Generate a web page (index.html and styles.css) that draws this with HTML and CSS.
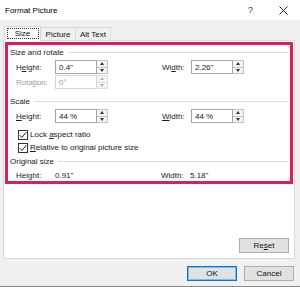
FILE: index.html
```html
<!DOCTYPE html>
<html>
<head>
<meta charset="utf-8">
<link rel="stylesheet" href="styles.css">
</head>
<body>
<div class="dialog">
  <div class="titlebar">
    <span class="title">Format Picture</span>
    <span class="help">?</span>
    <svg class="close" width="9" height="9" viewBox="0 0 9 9"><path d="M0.5 0.5L8.5 8.5M8.5 0.5L0.5 8.5" stroke="#222" stroke-width="1"/></svg>
  </div>
  <div class="tabs">
    <div class="tab active"><span class="focus">Size</span></div>
    <div class="tab">Picture</div>
    <div class="tab tab-alt">Alt Text</div>
  </div>
  <div class="panel">
    <div class="highlight">
      <div class="head"><span>Size and rotate</span><i></i></div>
      <div class="row">
        <div class="field"><label class="lbl">H<u>e</u>ight:</label><div class="input">0.4"</div><div class="spin"><b class="up"></b><b class="down"></b></div></div>
        <div class="field f2"><label class="lbl lbl2">Wi<u>d</u>th:</label><div class="input">2.26"</div><div class="spin"><b class="up"></b><b class="down"></b></div></div>
      </div>
      <div class="row">
        <div class="field disabled"><label class="lbl">Rota<u>t</u>ion:</label><div class="input">0°</div><div class="spin"><b class="up"></b><b class="down"></b></div></div>
      </div>
      <div class="head scale"><span>Scale</span><i></i></div>
      <div class="row">
        <div class="field"><label class="lbl"><u>H</u>eight:</label><div class="input">44 %</div><div class="spin"><b class="up"></b><b class="down"></b></div></div>
        <div class="field f2"><label class="lbl lbl2"><u>W</u>idth:</label><div class="input">44 %</div><div class="spin"><b class="up"></b><b class="down"></b></div></div>
      </div>
      <div class="check first"><span class="box"><svg width="8" height="8" viewBox="0 0 8 8"><path d="M0.8 4.2L3 6.4L7.3 1.2" fill="none" stroke="#222" stroke-width="1"/></svg></span><span>Lock <u>a</u>spect ratio</span></div>
      <div class="check"><span class="box"><svg width="8" height="8" viewBox="0 0 8 8"><path d="M0.8 4.2L3 6.4L7.3 1.2" fill="none" stroke="#222" stroke-width="1"/></svg></span><span><u>R</u>elative to original picture size</span></div>
      <div class="head orig"><span>Original size</span><i></i></div>
      <div class="row info">
        <div class="field"><span class="lbl">Height:</span><span class="val">0.91"</span></div>
        <div class="field f2i"><span class="lbl lbl2">Width:</span><span class="val">5.18"</span></div>
      </div>
    </div>
    <div class="panel-foot"><button class="btn">Re<u>s</u>et</button></div>
  </div>
  <div class="footer">
    <button class="btn default">OK</button>
    <button class="btn">Cancel</button>
  </div>
</div>
</body>
</html>
```
FILE: styles.css
```css
* { box-sizing: border-box; }
html, body { margin: 0; padding: 0; }
body {
  width: 300px;
  height: 287px;
  background: #f0f0f0;
  font-family: "Liberation Sans", Arial, sans-serif;
  font-size: 8px;
  color: #1a1a1a;
  overflow: hidden;
}
u { text-decoration: underline; text-underline-offset: 1px; }
.dialog {
  width: 300px;
  height: 287px;
  display: flex;
  flex-direction: column;
  border-bottom: 1px solid #8a8a8a;
}
.titlebar {
  height: 20px;
  background: #fff;
  display: flex;
  align-items: center;
  padding-left: 5px;
}
.title { font-size: 8px; color: #000; flex: 1; }
.help { font-size: 9px; color: #333; margin-right: 26px; }
.close { margin-right: 12px; }
.tabs {
  height: 20px;
  display: flex;
  align-items: flex-end;
  padding-left: 4px;
}
.tab {
  height: 13px;
  width: 36px;
  border: 1px solid #d9d9d9;
  border-bottom: none;
  background: #f0f0f0;
  display: flex;
  align-items: center;
  justify-content: center;
  margin-left: -1px;
  color: #111;
}
.tab-alt { width: 36px; }
.tab.active {
  height: 15px;
  width: 37px;
  background: #fff;
  margin-left: 0;
  margin-bottom: -1px;
  position: relative;
  z-index: 1;
  align-items: flex-start;
  padding-top: 1px;
}
.focus {
  border: 1px dotted #333;
  width: 32px;
  height: 11px;
  display: flex;
  align-items: center;
  justify-content: center;
}
.panel {
  margin-left: 3px;
  width: 292px;
  height: 219px;
  background: #fff;
  border: 1px solid #d9d9d9;
  padding: 1px;
  display: flex;
  flex-direction: column;
}
.highlight {
  border: 3px solid #d81f64;
  height: 142px;
  padding: 1px 1px 0 2px;
}
.head {
  height: 12px;
  display: flex;
  align-items: center;
  color: #1a1a1a;
}
.head i {
  flex: 1;
  height: 1px;
  background: #dcdcdc;
  margin-left: 4px;
  margin-right: 1px;
}
.row {
  display: flex;
  height: 14px;
  margin-top: 2px;
  padding-left: 6px;
}
.row + .row { margin-top: 1px; }
.field { display: flex; align-items: center; height: 14px; }
.lbl { width: 39px; }
.lbl2 { width: 29px; }
.f2 { margin-left: 54px; }
.input {
  width: 42px;
  height: 14px;
  border: 1px solid #a6a6a6;
  padding-left: 3px;
  display: flex;
  align-items: center;
}
.spin {
  width: 11px;
  height: 14px;
  border: 1px solid #c4c4c4;
  border-left: none;
  background: #f4f4f4;
  display: flex;
  flex-direction: column;
}
.spin b {
  flex: 1;
  display: flex;
  align-items: center;
  justify-content: center;
}
.spin b.up { border-bottom: 1px solid #c4c4c4; }
.spin b::before {
  content: "";
  width: 0; height: 0;
  border-left: 2.5px solid transparent;
  border-right: 2.5px solid transparent;
}
.spin b.up::before { border-bottom: 3px solid #333; }
.spin b.down::before { border-top: 3px solid #333; }
.disabled { color: #9a9a9a; }
.disabled .input { border-color: #d4d4d4; background: #fff; }
.disabled .spin { border-color: #e0e0e0; }
.disabled .spin b.up { border-bottom-color: #e0e0e0; }
.disabled .spin b.up::before { border-bottom-color: #b0b0b0; }
.disabled .spin b.down::before { border-top-color: #b0b0b0; }
.head.scale { margin-top: 6px; }
.check {
  display: flex;
  align-items: center;
  height: 13px;
  padding-left: 8px;
}
.check.first { margin-top: 5px; }
.box {
  width: 10px;
  height: 10px;
  border: 1px solid #333;
  margin-right: 2px;
  display: flex;
  align-items: center;
  justify-content: center;
  background: #fff;
}
.head.orig { margin-top: 1px; }
.row.info { margin-top: 2px; height: 12px; }
.row.info .field { height: 12px; }
.val { width: 40px; }
.f2i { margin-left: 66px; }
.panel-foot {
  flex: 1;
  display: flex;
  justify-content: flex-end;
  align-items: flex-end;
  padding: 0 4px 4px 0;
}
.btn {
  font-family: "Liberation Sans", Arial, sans-serif;
  font-size: 8px;
  color: #111;
  width: 50px;
  height: 15px;
  background: #e1e1e1;
  border: 1px solid #adadad;
  padding: 0;
  margin: 0;
}
.footer {
  flex: 1;
  display: flex;
  justify-content: flex-end;
  align-items: flex-start;
  gap: 7px;
  padding-top: 7px;
  padding-right: 6px;
}
.btn.default { border: 1px solid #0078d7; box-shadow: inset 0 0 0 1px #7fbcea; }
```
